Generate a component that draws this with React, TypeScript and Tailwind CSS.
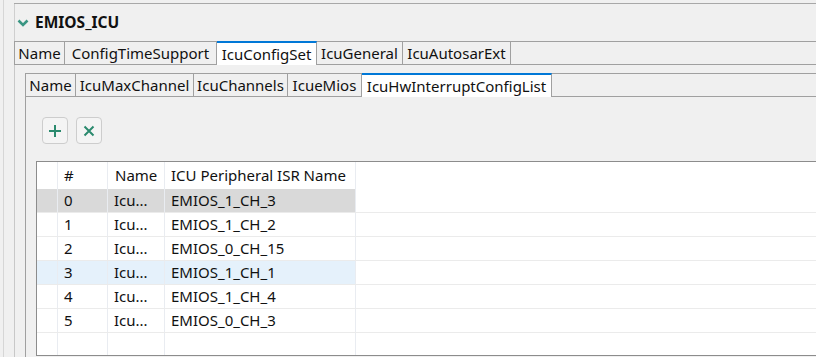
import React from "react";

const font = { fontFamily: '"Noto Sans", "Open Sans", sans-serif' };

interface TabProps {
  label: string;
  width: string;
  active?: boolean;
  first?: boolean;
}

const Tab: React.FC<TabProps> = ({ label, width, active, first }) => {
  const base = "h-[24px] flex items-center justify-center text-[15px] text-[#111] shrink-0 border-r border-[#a0a0a0]";
  const cls = active
    ? `${base} bg-white border-t-2 border-t-[#0078d7]`
    : `${base} border-t border-b`;
  return (
    <div className={`${cls} ${width} ${first ? "border-l" : ""}`}>
      <span className="leading-none">{label}</span>
    </div>
  );
};

const rows = [
  { n: "0", isr: "EMIOS_1_CH_3", hl: "bg-[#d9d9d9]" },
  { n: "1", isr: "EMIOS_1_CH_2", hl: "" },
  { n: "2", isr: "EMIOS_0_CH_15", hl: "" },
  { n: "3", isr: "EMIOS_1_CH_1", hl: "bg-[#e5f1fb]" },
  { n: "4", isr: "EMIOS_1_CH_4", hl: "" },
  { n: "5", isr: "EMIOS_0_CH_3", hl: "" },
];

const cell = "border-r border-[#e9ecf1] flex items-center pl-[6px] text-[15px] text-[#111] whitespace-nowrap overflow-hidden";

export default function App() {
  return (
    <div className="flex h-[357px] w-[816px] overflow-hidden bg-[#f0f0f0] pl-[3px]" style={font}>
      <div className="w-[11px] shrink-0 border-l border-[#d6d6d6]" />
      <div className="mt-[3px] flex min-w-0 flex-1 flex-col border-t border-[#a8a8a8]">
        {/* section title */}
        <div className="flex h-[37px] shrink-0 items-center border-l border-[#cfcfcf] pl-[2px]">
          <svg width="12" height="8" viewBox="0 0 12 8" className="mt-[1px]">
            <polyline points="1.5,1.5 6,6 10.5,1.5" fill="none" stroke="#3a9683" strokeWidth="2.6" />
          </svg>
          <span className="ml-[6px] text-[15.5px] font-bold text-[#111]">EMIOS_ICU</span>
        </div>

        {/* outer tab folder */}
        <div className="flex min-w-0 flex-1 flex-col">
          <div className="flex shrink-0">
            <Tab label="Name" width="w-[51px]" first />
            <Tab label="ConfigTimeSupport" width="w-[152px]" />
            <Tab label="IcuConfigSet" width="w-[100px]" active />
            <Tab label="IcuGeneral" width="w-[86px]" />
            <Tab label="IcuAutosarExt" width="w-[108px]" />
            <div className="h-[24px] flex-1 border-t border-b border-[#a0a0a0]" />
          </div>
          <div className="flex min-h-0 flex-1 flex-col border-l border-[#c8c8c8] pl-[10px] pt-[8px]">
            {/* inner tab folder */}
            <div className="flex shrink-0">
              <Tab label="Name" width="w-[51px]" first />
              <Tab label="IcuMaxChannel" width="w-[118px]" />
              <Tab label="IcuChannels" width="w-[94px]" />
              <Tab label="IcueMios" width="w-[74px]" />
              <Tab label="IcuHwInterruptConfigList" width="w-[190px]" active />
              <div className="h-[24px] flex-1 border-t border-b border-[#a0a0a0]" />
            </div>
            <div className="flex min-h-0 flex-1 flex-col border-l border-[#a0a0a0] pl-[10px]">
              <div className="ml-[6px] mt-[20px] flex gap-[8px]">
                <button className="flex h-[27px] w-[26px] items-center justify-center rounded-[4px] border border-[#cdcdcd] bg-[#f4f4f4]">
                  <svg width="14" height="14" viewBox="0 0 14 14">
                    <path d="M7 1v12M1 7h12" stroke="#2b8a6e" strokeWidth="2" />
                  </svg>
                </button>
                <button className="flex h-[27px] w-[26px] items-center justify-center rounded-[4px] border border-[#cdcdcd] bg-[#f4f4f4]">
                  <svg width="12" height="12" viewBox="0 0 12 12">
                    <path d="M1.5 1.5l9 9M10.5 1.5l-9 9" stroke="#2b8a6e" strokeWidth="2" />
                  </svg>
                </button>
              </div>

              {/* table */}
              <div className="mt-[17px] h-[195px] shrink-0 border-y border-l border-[#8c8c8c] bg-white">
                <div className="grid h-[27px] grid-cols-[21px_50px_57px_191px_1fr]">
                  <div className={cell} />
                  <div className={cell}>#</div>
                  <div className={`${cell} pl-[7px]`}>Name</div>
                  <div className={cell}>ICU Peripheral ISR Name</div>
                  <div />
                </div>
                {rows.map((r) => (
                  <div key={r.n} className="grid h-[24px] grid-cols-[21px_50px_57px_191px_1fr] border-b border-[#ebebeb]">
                    <div className={`${cell} ${r.hl}`} />
                    <div className={`${cell} ${r.hl}`}>{r.n}</div>
                    <div className={`${cell} ${r.hl}`}>Icu...</div>
                    <div className={`${cell} ${r.hl}`}>{r.isr}</div>
                    <div />
                  </div>
                ))}
                <div className="grid h-[22px] grid-cols-[21px_50px_57px_191px_1fr]">
                  <div className={cell} />
                  <div className={cell} />
                  <div className={cell} />
                  <div className={cell} />
                  <div />
                </div>
              </div>
            </div>
          </div>
        </div>
      </div>
    </div>
  );
}
